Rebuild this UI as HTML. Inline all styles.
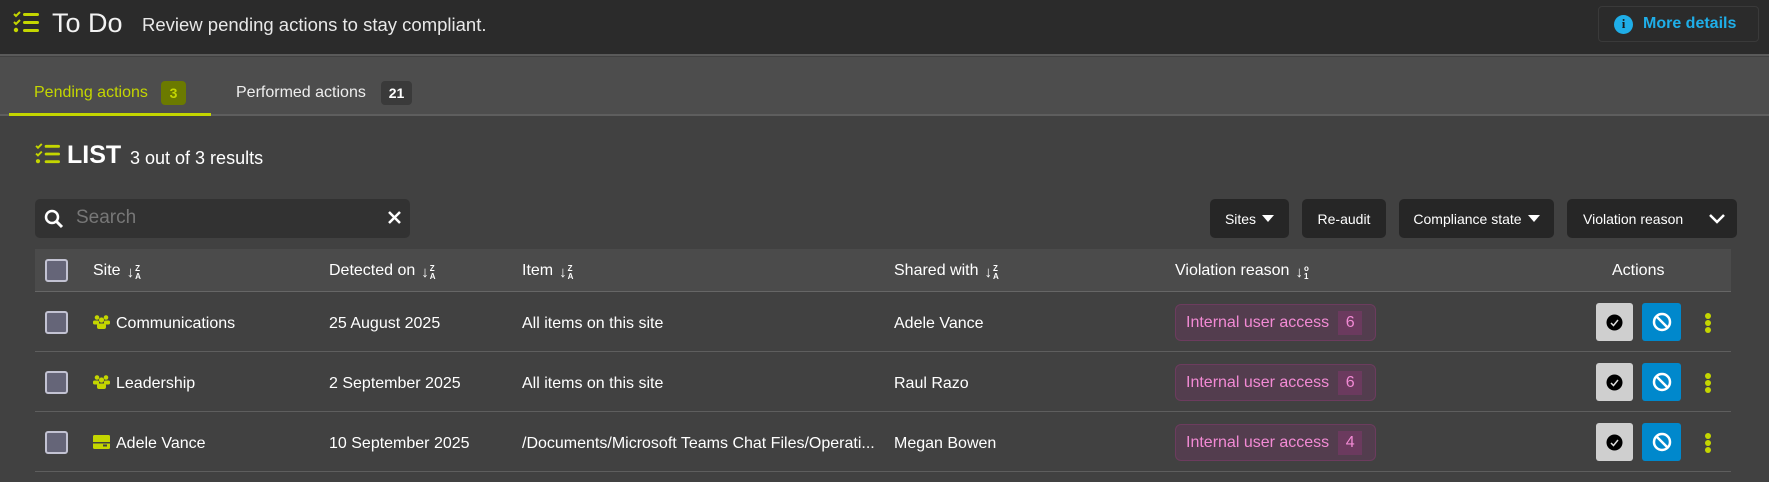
<!DOCTYPE html>
<html><head><meta charset="utf-8"><style>
*{margin:0;padding:0;box-sizing:border-box}
body{width:1769px;height:482px;background:#414141;font-family:"Liberation Sans",sans-serif;color:#fff;position:relative;overflow:hidden}
.a{position:absolute}
i{font-style:normal}
.hdr{left:0;top:0;width:1769px;height:56px;background:#2b2b2b;border-bottom:2px solid #5a5a5a}
.tabs{left:0;top:57px;width:1769px;height:59px;background:#4d4d4d;border-bottom:2px solid #5e5e5e}
.btn{background:#262626;border-radius:5px;top:199px;height:39px;font-size:14px;display:flex;align-items:center;justify-content:center;gap:6px}
.tri{width:0;height:0;border-left:6px solid transparent;border-right:6px solid transparent;border-top:7px solid #fff}
.th{top:249px;left:35px;width:1696px;height:43px;background:#4b4b4b;border-bottom:1px solid #666}
.row{left:35px;width:1696px;height:60px;border-bottom:1px solid #5e5e5e}
.cb{width:23px;height:23px;background:#656578;border:2px solid #c2c2d2;border-radius:3px}
.t{font-size:16px;white-space:nowrap}
.s{display:inline-flex;align-items:center;margin-left:6px;vertical-align:-2px}
.s em{font-style:normal;font-weight:bold;font-size:15px;line-height:15px}
.s span{display:flex;flex-direction:column;font-size:8px;font-weight:bold;line-height:8px;margin-left:1px}
.pill{left:1175px;width:201px;height:37px;background:#533d4e;border:1px solid #6c3c5e;border-radius:6px;color:#f28ad4;font-size:16px;display:flex;align-items:center;padding-left:10px}
.pill b{margin-left:9px;background:#6b3a5e;width:24px;height:24px;display:flex;align-items:center;justify-content:center;font-weight:normal}
.g{width:37px;height:38px;background:#cfcfcf;border-radius:3px;display:flex;align-items:center;justify-content:center}
.bl{width:39px;height:38px;background:#0088cc;border-radius:3px;display:flex;align-items:center;justify-content:center}
.dots{width:6px}
.dots i{display:block;width:6px;height:6px;border-radius:3px;background:#c4d600;margin-bottom:1px}
</style></head><body>
<div class="a hdr"></div>
<svg class="a" style="left:13px;top:11px" width="28" height="23" viewBox="0 0 28 23"><path d="M1 3l2 2 4-4" stroke="#c4d600" stroke-width="2" fill="none"/><path d="M1 11l2 2 4-4" stroke="#c4d600" stroke-width="2" fill="none"/><circle cx="3" cy="19" r="2.2" fill="#c4d600"/><rect x="10" y="2" width="16" height="3" rx="1.5" fill="#c4d600"/><rect x="10" y="10" width="16" height="3" rx="1.5" fill="#c4d600"/><rect x="10" y="18" width="16" height="3" rx="1.5" fill="#c4d600"/></svg>
<div class="a" style="left:52px;top:8px;font-size:27px;color:#f2f2f2">To Do</div>
<div class="a" style="left:142px;top:14px;font-size:18.5px;color:#e8e8e8">Review pending actions to stay compliant.</div>
<div class="a" style="left:1598px;top:6px;width:161px;height:36px;border:1px solid #3a3a3a;border-radius:4px;background:#2b2b2b;display:flex;align-items:center;padding-left:15px;gap:10px;color:#1faee8;font-weight:bold;font-size:16px"><span style="width:19px;height:19px;border-radius:50%;background:#1faee8;color:#1a1a1a;font-size:13px;display:flex;align-items:center;justify-content:center;font-family:'Liberation Serif',serif">i</span>More details</div>
<div class="a tabs"></div>
<div class="a" style="left:9px;top:113px;width:202px;height:3px;background:#c4d600"></div>
<div class="a" style="left:34px;top:84px;font-size:16px;color:#c4d600">Pending actions</div>
<div class="a" style="left:161px;top:81px;width:25px;height:24px;background:#6b7a00;border-radius:4px;color:#c4d600;font-weight:bold;font-size:14px;display:flex;align-items:center;justify-content:center">3</div>
<div class="a" style="left:236px;top:84px;font-size:16px;color:#eee">Performed actions</div>
<div class="a" style="left:381px;top:81px;width:31px;height:24px;background:#3a3a3a;border-radius:4px;font-weight:bold;font-size:14px;display:flex;align-items:center;justify-content:center">21</div>
<svg class="a" style="left:35px;top:143px" width="27" height="22" viewBox="0 0 28 23"><path d="M1 3l2 2 4-4" stroke="#c4d600" stroke-width="2" fill="none"/><path d="M1 11l2 2 4-4" stroke="#c4d600" stroke-width="2" fill="none"/><circle cx="3" cy="19" r="2.2" fill="#c4d600"/><rect x="10" y="2" width="16" height="3" rx="1.5" fill="#c4d600"/><rect x="10" y="10" width="16" height="3" rx="1.5" fill="#c4d600"/><rect x="10" y="18" width="16" height="3" rx="1.5" fill="#c4d600"/></svg>
<div class="a" style="left:67px;top:141px;font-size:25px;font-weight:bold">LIST</div>
<div class="a" style="left:130px;top:148px;font-size:18px">3 out of 3 results</div>
<div class="a" style="left:35px;top:199px;width:375px;height:39px;background:#323232;border-radius:5px"></div>
<svg class="a" style="left:44px;top:209px" width="20" height="20" viewBox="0 0 20 20"><circle cx="8" cy="8" r="6" stroke="#fff" stroke-width="2.5" fill="none"/><path d="M12.5 12.5L18 18" stroke="#fff" stroke-width="3"/></svg>
<div class="a" style="left:76px;top:207px;font-size:19px;color:#777">Search</div>
<svg class="a" style="left:388px;top:211px" width="13" height="13"><path d="M1 1L12 12M12 1L1 12" stroke="#fff" stroke-width="2.5"/></svg>
<div class="a btn" style="left:1210px;width:79px">Sites<span class="tri"></span></div>
<div class="a btn" style="left:1302px;width:84px">Re-audit</div>
<div class="a btn" style="left:1399px;width:155px">Compliance state<span class="tri"></span></div>
<div class="a btn" style="left:1567px;width:170px;justify-content:flex-start;padding-left:16px">Violation reason<svg style="margin-left:20px" width="16" height="10"><path d="M1 1l7 7 7-7" stroke="#fff" stroke-width="2.5" fill="none"/></svg></div>
<div class="a th"></div>
<div class="a cb" style="left:45px;top:259px"></div>
<div class="a t" style="left:93px;top:262px">Site<span class="s"><em>↓</em><span><i>Z</i><i>A</i></span></span></div>
<div class="a t" style="left:329px;top:262px">Detected on<span class="s"><em>↓</em><span><i>Z</i><i>A</i></span></span></div>
<div class="a t" style="left:522px;top:262px">Item<span class="s"><em>↓</em><span><i>Z</i><i>A</i></span></span></div>
<div class="a t" style="left:894px;top:262px">Shared with<span class="s"><em>↓</em><span><i>Z</i><i>A</i></span></span></div>
<div class="a t" style="left:1175px;top:262px">Violation reason<span class="s"><em>↓</em><span><i>o</i><i>1</i></span></span></div>
<div class="a t" style="left:1612px;top:262px">Actions</div>

<div class="a row" style="top:292px"></div>
<div class="a row" style="top:352px"></div>
<div class="a row" style="top:412px"></div>

<!-- row1 -->
<div class="a cb" style="left:45px;top:311px"></div>
<svg class="a" style="left:93px;top:315px" width="17" height="14" viewBox="0 0 17 14"><circle cx="4" cy="2.5" r="2.3" fill="#c4d600"/><circle cx="13" cy="2.5" r="2.3" fill="#c4d600"/><circle cx="8.5" cy="5" r="2.6" fill="#c4d600"/><rect x="0" y="5.5" width="6" height="4" rx="1.5" fill="#c4d600"/><rect x="11" y="5.5" width="6" height="4" rx="1.5" fill="#c4d600"/><rect x="4" y="8.5" width="9" height="5.5" rx="2" fill="#c4d600"/></svg>
<div class="a t" style="left:116px;top:315px">Communications</div>
<div class="a t" style="left:329px;top:315px">25 August 2025</div>
<div class="a t" style="left:522px;top:315px">All items on this site</div>
<div class="a t" style="left:894px;top:315px">Adele Vance</div>
<div class="a pill" style="top:304px">Internal user access<b>6</b></div>
<!-- row2 -->
<div class="a cb" style="left:45px;top:371px"></div>
<svg class="a" style="left:93px;top:375px" width="17" height="14" viewBox="0 0 17 14"><circle cx="4" cy="2.5" r="2.3" fill="#c4d600"/><circle cx="13" cy="2.5" r="2.3" fill="#c4d600"/><circle cx="8.5" cy="5" r="2.6" fill="#c4d600"/><rect x="0" y="5.5" width="6" height="4" rx="1.5" fill="#c4d600"/><rect x="11" y="5.5" width="6" height="4" rx="1.5" fill="#c4d600"/><rect x="4" y="8.5" width="9" height="5.5" rx="2" fill="#c4d600"/></svg>
<div class="a t" style="left:116px;top:375px">Leadership</div>
<div class="a t" style="left:329px;top:375px">2 September 2025</div>
<div class="a t" style="left:522px;top:375px">All items on this site</div>
<div class="a t" style="left:894px;top:375px">Raul Razo</div>
<div class="a pill" style="top:364px">Internal user access<b>6</b></div>
<!-- row3 -->
<div class="a cb" style="left:45px;top:431px"></div>
<svg class="a" style="left:93px;top:435px" width="17" height="14"><rect width="17" height="14" rx="1.5" fill="#c4d600"/><rect x="0" y="7" width="17" height="1.5" fill="#414141"/><rect x="10" y="9.5" width="4" height="2" fill="#414141"/></svg>
<div class="a t" style="left:116px;top:435px">Adele Vance</div>
<div class="a t" style="left:329px;top:435px">10 September 2025</div>
<div class="a t" style="left:522px;top:435px">/Documents/Microsoft Teams Chat Files/Operati...</div>
<div class="a t" style="left:894px;top:435px">Megan Bowen</div>
<div class="a pill" style="top:424px">Internal user access<b>4</b></div>

<!-- actions -->
<div class="a g" style="left:1596px;top:303px"><svg width="17" height="17"><circle cx="8.5" cy="8.5" r="8" fill="#000"/><path d="M5 9l2.5 2.5L12 6" stroke="#ddd" stroke-width="1.5" fill="none"/></svg></div>
<div class="a bl" style="left:1642px;top:303px"><svg width="20" height="20"><circle cx="10" cy="10" r="8" stroke="#fff" stroke-width="2.5" fill="none"/><path d="M4.5 4.5l11 11" stroke="#fff" stroke-width="2.5"/></svg></div>
<div class="a dots" style="left:1705px;top:313px"><i></i><i></i><i></i></div>
<div class="a g" style="left:1596px;top:363px"><svg width="17" height="17"><circle cx="8.5" cy="8.5" r="8" fill="#000"/><path d="M5 9l2.5 2.5L12 6" stroke="#ddd" stroke-width="1.5" fill="none"/></svg></div>
<div class="a bl" style="left:1642px;top:363px"><svg width="20" height="20"><circle cx="10" cy="10" r="8" stroke="#fff" stroke-width="2.5" fill="none"/><path d="M4.5 4.5l11 11" stroke="#fff" stroke-width="2.5"/></svg></div>
<div class="a dots" style="left:1705px;top:373px"><i></i><i></i><i></i></div>
<div class="a g" style="left:1596px;top:423px"><svg width="17" height="17"><circle cx="8.5" cy="8.5" r="8" fill="#000"/><path d="M5 9l2.5 2.5L12 6" stroke="#ddd" stroke-width="1.5" fill="none"/></svg></div>
<div class="a bl" style="left:1642px;top:423px"><svg width="20" height="20"><circle cx="10" cy="10" r="8" stroke="#fff" stroke-width="2.5" fill="none"/><path d="M4.5 4.5l11 11" stroke="#fff" stroke-width="2.5"/></svg></div>
<div class="a dots" style="left:1705px;top:433px"><i></i><i></i><i></i></div>
</body></html>
